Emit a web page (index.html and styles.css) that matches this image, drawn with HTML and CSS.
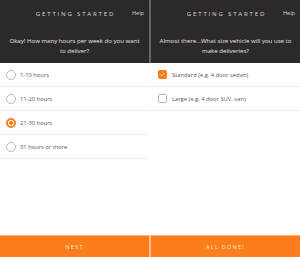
FILE: index.html
```html
<!DOCTYPE html>
<html>
<head>
<meta charset="utf-8">
<link rel="stylesheet" href="styles.css">
</head>
<body>
<div class="app">
  <section class="pane pane-left">
    <header class="head">
      <div class="titlebar">
        <span class="title">GETTING STARTED</span>
        <span class="help">Help</span>
      </div>
      <p class="question">Okay! How many hours per week do you want to deliver?</p>
    </header>
    <ul class="options">
      <li class="option"><span class="radio"></span><span class="label">1-10 hours</span></li>
      <li class="option"><span class="radio"></span><span class="label">11-20 hours</span></li>
      <li class="option"><span class="radio radio-on"></span><span class="label">21-30 hours</span></li>
      <li class="option"><span class="radio"></span><span class="label">31 hours or more</span></li>
    </ul>
    <button class="footer">NEXT</button>
  </section>
  <section class="pane pane-right">
    <header class="head">
      <div class="titlebar">
        <span class="title">GETTING STARTED</span>
        <span class="help">Help</span>
      </div>
      <p class="question">Almost there...What size vehicle will you use to make deliveries?</p>
    </header>
    <ul class="options">
      <li class="option"><span class="check check-on"><svg viewBox="0 0 10 10" width="9" height="9"><path d="M2.6 5.2 L4.3 6.8 L7.5 3.4" fill="none" stroke="#fff" stroke-width="1.1" stroke-linecap="round" stroke-linejoin="round"/></svg></span><span class="label">Standard (e.g. 4 door sedan)</span></li>
      <li class="option"><span class="check"></span><span class="label">Large (e.g. 4 door SUV, van)</span></li>
    </ul>
    <button class="footer">ALL DONE!</button>
  </section>
</div>
</body>
</html>
```

FILE: styles.css
```css
* { box-sizing: border-box; }
html, body { margin: 0; padding: 0; background: #fff; }
body { font-family: "Open Sans", "Noto Sans", "Liberation Sans", sans-serif; }

.app {
  display: flex;
  width: 300px;
  height: 257px;
  justify-content: space-between;
  background: #fff;
}

.pane {
  width: 149px;
  height: 257px;
  display: flex;
  flex-direction: column;
}

.head {
  height: 63px;
  background: #2b2929;
  color: #e2e2e2;
}
.pane-left .head { border-right: 1px solid rgba(255,255,255,0.28); width: 150px; }
.pane-right .head { border-left: 1px solid rgba(255,255,255,0.28); width: 150px; margin-left: -1px; }

.titlebar {
  position: relative;
  height: 27px;
  display: flex;
  align-items: center;
  justify-content: center;
}
.title {
  font-size: 6.1px;
  letter-spacing: 1.8px;
  color: #d8d8d8;
  padding-left: 2px;
}
.help {
  position: absolute;
  right: 5px;
  top: 9px;
  font-size: 5.6px;
  color: #d4d4d4;
}

.question {
  margin: 0;
  padding: 9px 6px 0;
  font-size: 6.1px;
  line-height: 10px;
  text-align: center;
  color: #e6e6e6;
}

.options {
  list-style: none;
  margin: 0;
  padding: 0;
  flex: 1;
}
.option {
  height: 24px;
  border-bottom: 1px solid #eeeeee;
  display: flex;
  align-items: center;
  padding-left: 6px;
}
.label {
  font-size: 5.8px;
  color: #555;
}

.radio {
  width: 10px;
  height: 10px;
  border-radius: 50%;
  border: 1px solid #b9b9b9;
  margin-right: 4px;
  flex: none;
}
.radio-on {
  border: 2px solid #fb7d1b;
  background: radial-gradient(circle, #fb7d1b 0 1.7px, #fff 2.1px);
}

.check {
  width: 9px;
  height: 9px;
  border-radius: 1.5px;
  border: 1px solid #b5b5b5;
  margin-right: 5px;
  margin-left: 1px;
  flex: none;
  display: flex;
  align-items: center;
  justify-content: center;
}
.check svg { display: block; }
.check-on {
  background: #fb7d1b;
  border-color: #fb7d1b;
}

.footer {
  height: 22px;
  border: 0;
  border-top: 1px solid #fcb47c;
  background: #fb7d1b;
  color: #fde5d2;
  font-family: inherit;
  font-size: 5.6px;
  letter-spacing: 1.2px;
  padding: 0;
  margin: 0;
  width: 150px;
}
.pane-left .footer { border-right: 1px solid #fcc39a; }
.pane-right .footer { border-left: 1px solid #fcc39a; margin-left: -1px; }
```
